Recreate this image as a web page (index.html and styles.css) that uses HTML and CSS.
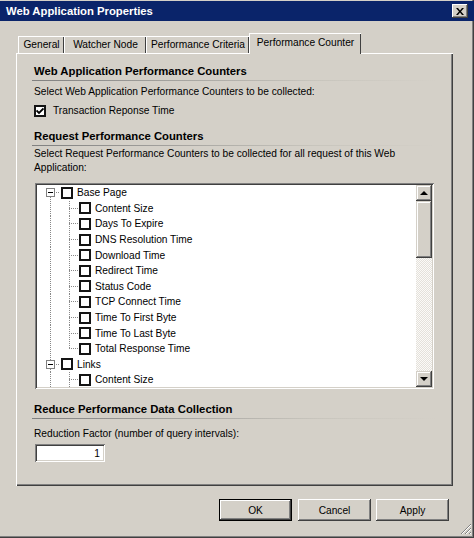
FILE: index.html
```html
<!DOCTYPE html>
<html lang="en">
<head>
    <meta charset="UTF-8">
    <title>Web Application Properties</title>
    <link rel="stylesheet" href="styles.css">
</head>
<body>
    <div class="window">
        <!-- Title bar -->
        <header class="titlebar">
            <span class="title">Web Application Properties</span>
            <button class="close-btn" aria-label="Close">
                <svg width="8" height="7" viewBox="0 0 8 7">
                    <path d="M0 0h2l2 2.5L6 0h2L5 3.5 8 7H6L4 4.5 2 7H0l3-3.5z" fill="#000"/>
                </svg>
            </button>
        </header>

        <div class="dialog">
            <!-- Tabs -->
            <nav class="tabs">
                <div class="tab tab-general">General</div>
                <div class="tab tab-watcher">Watcher Node</div>
                <div class="tab tab-criteria">Performance Criteria</div>
                <div class="tab tab-counter active">Performance Counter</div>
            </nav>

            <div class="panel">
                <h2 class="group-title">Web Application Performance Counters</h2>
                <p class="hint">Select Web Application Performance Counters to be collected:</p>
                <label class="check-row">
                    <span class="checkbox checked">
                        <svg width="8" height="8" viewBox="0 0 8 8"><path d="M0.5 3.5L3 6L7.5 1.5" stroke="#000" stroke-width="1.8" fill="none"/></svg>
                    </span>
                    Transaction Reponse Time
                </label>

                <h2 class="group-title">Request Performance Counters</h2>
                <p class="hint hint-wrap">Select Request Performance Counters to be collected for all request of this Web<br>Application:</p>

                <!-- Counter tree -->
                <div class="tree-box">
                    <div class="tree">
                        <div class="node"><span class="ln exp-first"><span class="expander"></span></span><span class="checkbox"></span><span class="label">Base Page</span></div>
                        <div class="node"><span class="ln pipe"></span><span class="ln tee"></span><span class="checkbox"></span><span class="label">Content Size</span></div>
                        <div class="node"><span class="ln pipe"></span><span class="ln tee"></span><span class="checkbox"></span><span class="label">Days To Expire</span></div>
                        <div class="node"><span class="ln pipe"></span><span class="ln tee"></span><span class="checkbox"></span><span class="label">DNS Resolution Time</span></div>
                        <div class="node"><span class="ln pipe"></span><span class="ln tee"></span><span class="checkbox"></span><span class="label">Download Time</span></div>
                        <div class="node"><span class="ln pipe"></span><span class="ln tee"></span><span class="checkbox"></span><span class="label">Redirect Time</span></div>
                        <div class="node"><span class="ln pipe"></span><span class="ln tee"></span><span class="checkbox"></span><span class="label">Status Code</span></div>
                        <div class="node"><span class="ln pipe"></span><span class="ln tee"></span><span class="checkbox"></span><span class="label">TCP Connect Time</span></div>
                        <div class="node"><span class="ln pipe"></span><span class="ln tee"></span><span class="checkbox"></span><span class="label">Time To First Byte</span></div>
                        <div class="node"><span class="ln pipe"></span><span class="ln tee"></span><span class="checkbox"></span><span class="label">Time To Last Byte</span></div>
                        <div class="node"><span class="ln pipe"></span><span class="ln elbow"></span><span class="checkbox"></span><span class="label">Total Response Time</span></div>
                        <div class="node"><span class="ln exp-mid"><span class="expander"></span></span><span class="checkbox"></span><span class="label">Links</span></div>
                        <div class="node"><span class="ln pipe"></span><span class="ln tee"></span><span class="checkbox"></span><span class="label">Content Size</span></div>
                    </div>
                    <div class="scrollbar">
                        <div class="sb-btn"><span class="arrow-up"></span></div>
                        <div class="sb-thumb"></div>
                        <div class="sb-track"></div>
                        <div class="sb-btn"><span class="arrow-down"></span></div>
                    </div>
                </div>

                <h2 class="group-title group-reduce">Reduce Performance Data Collection</h2>
                <p class="hint hint-reduce">Reduction Factor (number of query intervals):</p>
                <input class="num-input" type="text" value="1">
            </div>

            <!-- Dialog buttons -->
            <div class="buttons">
                <button class="btn btn-default">OK</button>
                <button class="btn">Cancel</button>
                <button class="btn btn-apply">Apply</button>
            </div>
        </div>

        <svg class="size-grip" width="12" height="12" viewBox="0 0 12 12">
            <path d="M11 1L1 11M11 5L5 11M11 9L9 11" stroke="#808080" stroke-width="1"/>
            <path d="M11 2L2 11M11 6L6 11M11 10L10 11" stroke="#fff" stroke-width="1"/>
        </svg>
    </div>
</body>
</html>
```

FILE: styles.css
```css
:root {
    --face: #d4d0c8;
    --shadow: #808080;
    --dark: #404040;
    --light: #ffffff;
    --title-bg: #0a246a;
    --text: #000000;
}

* {
    margin: 0;
    padding: 0;
    box-sizing: border-box;
}

body {
    font-family: "Liberation Sans", Arial, sans-serif;
    font-size: 10.2px;
    color: var(--text);
    background: var(--face);
}

.window {
    position: relative;
    width: 474px;
    height: 538px;
    padding-top: 1px;
    background: var(--face);
    box-shadow: inset -1px -1px var(--dark), inset -2px -2px var(--shadow);
}

/* Title bar */
.titlebar {
    height: 20px;
    background: var(--title-bg);
    display: flex;
    align-items: center;
    justify-content: space-between;
    padding: 0 6px 0 6px;
}

.title {
    color: #fff;
    font-weight: bold;
    font-size: 11.3px;
}

.close-btn {
    width: 16px;
    height: 14px;
    border: none;
    background: var(--face);
    display: flex;
    align-items: center;
    justify-content: center;
    box-shadow: inset -1px -1px var(--dark), inset 1px 1px var(--light),
                inset -2px -2px var(--shadow), inset 2px 2px var(--face);
}

/* Tabs */
.dialog {
    padding: 0 0 0 16px;
}

.tabs {
    display: flex;
    align-items: flex-end;
    height: 20px;
    margin-top: 12px;
    padding-left: 2px;
}

.tab {
    height: 17px;
    line-height: 16px;
    text-align: center;
    background: var(--face);
    border-top: 1px solid var(--light);
    border-left: 1px solid var(--light);
    box-shadow: inset -1px 0 var(--dark);
    white-space: nowrap;
}

.tab-general { width: 46px; }
.tab-watcher { width: 82px; }
.tab-criteria { width: 103px; }
.tab-counter { width: 112px; }

.tab.active {
    height: 21px;
    line-height: 18px;
    margin-bottom: -1px;
    position: relative;
    z-index: 1;
}

/* Panel */
.panel {
    width: 437px;
    height: 433px;
    padding: 11px 17px 0 18px;
    background: var(--face);
    box-shadow: inset 1px 1px var(--light), inset -1px -1px var(--dark), inset -2px -2px var(--shadow);
}

.group-title {
    font-size: 11.3px;
    font-weight: bold;
    line-height: 15px;
    height: 18px;
    margin-left: -2px;
    padding-left: 2px;
    background: linear-gradient(to right, var(--shadow), #c8c5bd 70%, var(--face)) no-repeat left 0 bottom 1px / 100% 1px;
}

.group-title + .hint {
    margin-top: 2px;
}

.hint {
    line-height: 15px;
}

.hint-wrap {
    line-height: 14px;
    margin-top: 0 !important;
}

.check-row {
    display: flex;
    align-items: center;
    height: 15px;
    margin-top: 4px;
    gap: 7px;
}

.check-row + .group-title {
    margin-top: 11px;
}

.checkbox {
    width: 12px;
    height: 12px;
    flex: none;
    background: #fff;
    border: 2px solid #141414;
    display: flex;
    align-items: center;
    justify-content: center;
}

/* Tree */
.tree-box {
    margin-top: 8px;
    margin-left: 1px;
    width: 399px;
    height: 206px;
    padding: 2px;
    display: flex;
    background: #fff;
    box-shadow: inset 1px 1px var(--shadow), inset -1px -1px var(--light),
                inset 2px 2px var(--dark), inset -2px -2px var(--face);
}

.tree {
    flex: 1;
    overflow: hidden;
    padding-left: 4px;
}

.node {
    display: flex;
    align-items: center;
    height: 15.6px;
    white-space: nowrap;
}

.label {
    padding-left: 4px;
}

.ln {
    width: 19px;
    height: 100%;
    flex: none;
    display: flex;
    align-items: center;
    justify-content: center;
    background-repeat: no-repeat;
}

.exp-first + .checkbox,
.exp-mid + .checkbox {
    margin-left: 1px;
}

.pipe {
    background-image: repeating-linear-gradient(to bottom, #888 0 1px, transparent 1px 2px);
    background-size: 1px 100%;
    background-position: 9px 0;
}

.tee {
    background-image: repeating-linear-gradient(to bottom, #888 0 1px, transparent 1px 2px),
                      repeating-linear-gradient(to right, #888 0 1px, transparent 1px 2px);
    background-size: 1px 100%, 10px 1px;
    background-position: 9px 0, 9px 50%;
}

.elbow {
    background-image: repeating-linear-gradient(to bottom, #888 0 1px, transparent 1px 2px),
                      repeating-linear-gradient(to right, #888 0 1px, transparent 1px 2px);
    background-size: 1px 50%, 10px 1px;
    background-position: 9px 0, 9px 50%;
}

.exp-first {
    background-image: repeating-linear-gradient(to bottom, #888 0 1px, transparent 1px 2px),
                      repeating-linear-gradient(to right, #888 0 1px, transparent 1px 2px);
    background-size: 1px 50%, 10px 1px;
    background-position: 9px 100%, 9px 50%;
}

.exp-mid {
    background-image: repeating-linear-gradient(to bottom, #888 0 1px, transparent 1px 2px),
                      repeating-linear-gradient(to right, #888 0 1px, transparent 1px 2px);
    background-size: 1px 100%, 10px 1px;
    background-position: 9px 0, 9px 50%;
}

.expander {
    width: 9px;
    height: 9px;
    border: 1px solid var(--shadow);
    background: #fff;
    display: flex;
    align-items: center;
    justify-content: center;
}

.expander::before {
    content: "";
    width: 5px;
    height: 1px;
    background: #000;
}

/* Scrollbar */
.scrollbar {
    width: 16px;
    flex: none;
    display: flex;
    flex-direction: column;
}

.sb-btn,
.sb-thumb {
    background: var(--face);
    box-shadow: inset -1px -1px var(--dark), inset 1px 1px var(--face),
                inset -2px -2px var(--shadow), inset 2px 2px var(--light);
}

.sb-btn {
    height: 16px;
    display: flex;
    align-items: center;
    justify-content: center;
}

.sb-thumb {
    height: 57px;
}

.sb-track {
    flex: 1;
    background: repeating-conic-gradient(#e4e1db 0 25%, #fbfaf8 0 50%) 0 0 / 2px 2px;
}

.arrow-up,
.arrow-down {
    width: 0;
    height: 0;
    border-left: 4px solid transparent;
    border-right: 4px solid transparent;
}

.arrow-up {
    border-bottom: 4px solid #000;
}

.arrow-down {
    border-top: 4px solid #000;
}

/* Reduction factor */
.tree-box + .group-title {
    margin-top: 13px;
}

.hint-reduce {
    margin-top: 6px !important;
}

.num-input {
    display: block;
    margin-top: 3px;
    margin-left: 1px;
    width: 70px;
    height: 18px;
    border: none;
    outline: none;
    background: #fff;
    font: inherit;
    text-align: right;
    padding-right: 5px;
    box-shadow: inset 1px 1px var(--shadow), inset -1px -1px var(--light),
                inset 2px 2px var(--dark), inset -2px -2px var(--face);
}

/* Buttons */
.buttons {
    display: flex;
    gap: 6px;
    margin-top: 13px;
    padding-left: 203px;
}

.btn {
    width: 73px;
    height: 22px;
    border: none;
    background: var(--face);
    font: inherit;
    color: #000;
    box-shadow: inset -1px -1px var(--dark), inset 1px 1px var(--light),
                inset -2px -2px var(--shadow), inset 2px 2px var(--face);
}

.btn-default {
    border: 1px solid #000;
    box-shadow: inset -1px -1px var(--dark), inset 1px 1px var(--light),
                inset -2px -2px var(--shadow);
}

.btn-apply {
    margin-left: -1px;
}

.size-grip {
    position: absolute;
    right: 2px;
    bottom: 3px;
}
```
